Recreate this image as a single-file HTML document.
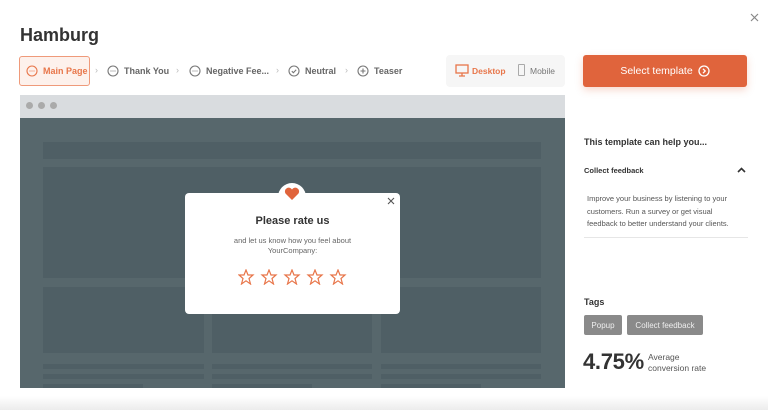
<!DOCTYPE html>
<html><head><meta charset="utf-8"><style>
*{box-sizing:border-box;margin:0;padding:0}
body{width:768px;height:410px;overflow:hidden;background:#fff;font-family:"Liberation Sans",sans-serif;position:relative;color:#333}
.a{position:absolute}
.blk{position:absolute;background:#4f5f65}
.tab{position:absolute;top:65px;font-size:9px;color:#666;display:flex;align-items:center;gap:5px;font-weight:600}
.tab svg{display:block}
.sep{position:absolute;top:65px;font-size:9px;color:#bbb}
</style></head><body>
<div class="a" style="left:20px;top:25px;font-size:18px;font-weight:bold;color:#333">Hamburg</div>
<svg class="a" style="left:750px;top:13px" width="9" height="9" viewBox="0 0 9 9"><path d="M1 1L8 8M8 1L1 8" stroke="#888" stroke-width="1.2"/></svg>

<div class="a" style="left:19px;top:56px;width:71px;height:30px;border:1px solid #ef9a7a;background:#fdf1ec;border-radius:3px"></div>
<div class="tab" style="left:26px;color:#e8764a"><svg width="12" height="12" viewBox="0 0 12 12"><circle cx="6" cy="6" r="5" fill="none" stroke="#e8764a" stroke-width="1.1"/><path d="M3.5 6h1M5.5 6h1M7.5 6h1" stroke="#e8764a" stroke-width="1.1"/></svg>Main Page</div>
<div class="sep" style="left:95px">›</div>
<div class="tab" style="left:107px"><svg width="12" height="12" viewBox="0 0 12 12"><circle cx="6" cy="6" r="5" fill="none" stroke="#777" stroke-width="1.1"/><path d="M3.5 6h1M5.5 6h1M7.5 6h1" stroke="#777" stroke-width="1.1"/></svg>Thank You</div>
<div class="sep" style="left:176px">›</div>
<div class="tab" style="left:189px"><svg width="12" height="12" viewBox="0 0 12 12"><circle cx="6" cy="6" r="5" fill="none" stroke="#777" stroke-width="1.1"/><path d="M3.5 6h1M5.5 6h1M7.5 6h1" stroke="#777" stroke-width="1.1"/></svg>Negative Fee...</div>
<div class="sep" style="left:276px">›</div>
<div class="tab" style="left:288px"><svg width="12" height="12" viewBox="0 0 12 12"><circle cx="6" cy="6" r="5" fill="none" stroke="#777" stroke-width="1.1"/><path d="M3.8 6.2l1.6 1.5 2.8-3" fill="none" stroke="#777" stroke-width="1.1"/></svg>Neutral</div>
<div class="sep" style="left:345px">›</div>
<div class="tab" style="left:357px"><svg width="12" height="12" viewBox="0 0 12 12"><circle cx="6" cy="6" r="5" fill="none" stroke="#777" stroke-width="1.1"/><path d="M6 3.5v5M3.5 6h5" stroke="#777" stroke-width="1.1"/></svg>Teaser</div>

<div class="a" style="left:446px;top:55px;width:119px;height:32px;background:#f6f6f6;border-radius:4px"></div>
<svg class="a" style="left:455px;top:64px" width="14" height="13" viewBox="0 0 14 13"><rect x="1" y="1" width="12" height="8" fill="none" stroke="#e8764a" stroke-width="1.3"/><path d="M7 9v3M4 12h6" stroke="#e8764a" stroke-width="1.3"/></svg>
<div class="a" style="left:472px;top:66px;font-size:8.5px;color:#e8764a;font-weight:600">Desktop</div>
<div class="a" style="left:518px;top:64px;width:7px;height:12px;border:1px solid #aaa;border-radius:1px"></div>
<div class="a" style="left:530px;top:66px;font-size:8.5px;color:#777">Mobile</div>

<div class="a" style="left:583px;top:55px;width:164px;height:32px;background:#e0643c;border-radius:3px;box-shadow:0 3px 8px rgba(224,100,60,.25);color:#fff;font-size:10.5px;display:flex;align-items:center;justify-content:center;gap:5px">Select template <svg width="12" height="12" viewBox="0 0 12 12"><circle cx="6" cy="6" r="5" fill="none" stroke="#fff" stroke-width="1.3"/><path d="M5 3.8L7.2 6 5 8.2" fill="none" stroke="#fff" stroke-width="1.3"/></svg></div>

<div class="a" style="left:20px;top:95px;width:545px;height:23px;background:#d9dcdf"></div>
<div class="a" style="left:26px;top:102px;width:7px;height:7px;border-radius:50%;background:#aaa"></div>
<div class="a" style="left:38px;top:102px;width:7px;height:7px;border-radius:50%;background:#aaa"></div>
<div class="a" style="left:50px;top:102px;width:7px;height:7px;border-radius:50%;background:#aaa"></div>
<div class="a" style="left:20px;top:118px;width:545px;height:270px;background:#57676c"></div>
<div class="blk" style="left:43px;top:142px;width:498px;height:17px"></div>
<div class="blk" style="left:43px;top:167px;width:498px;height:111px"></div>
<div class="blk" style="left:43px;top:287px;width:161px;height:66px"></div>
<div class="blk" style="left:212px;top:287px;width:160px;height:66px"></div>
<div class="blk" style="left:381px;top:287px;width:160px;height:66px"></div>
<div class="blk" style="left:43px;top:364px;width:161px;height:5px"></div>
<div class="blk" style="left:212px;top:364px;width:160px;height:5px"></div>
<div class="blk" style="left:381px;top:364px;width:160px;height:5px"></div>
<div class="blk" style="left:43px;top:374px;width:161px;height:5px"></div>
<div class="blk" style="left:212px;top:374px;width:160px;height:5px"></div>
<div class="blk" style="left:381px;top:374px;width:160px;height:5px"></div>
<div class="blk" style="left:43px;top:384px;width:100px;height:4px"></div>
<div class="blk" style="left:212px;top:384px;width:100px;height:4px"></div>
<div class="blk" style="left:381px;top:384px;width:100px;height:4px"></div>

<div class="a" style="left:185px;top:193px;width:215px;height:121px;background:#fff;border-radius:4px"></div>
<div class="a" style="left:278px;top:183px;width:28px;height:28px;background:#fff;border-radius:50%"></div>
<svg class="a" style="left:284px;top:187px" width="16" height="14" viewBox="0 0 16 14"><path d="M8 13 L1.5 6.5 A3.5 3.5 0 0 1 8 2.5 A3.5 3.5 0 0 1 14.5 6.5 Z" fill="#e0643c"/></svg>
<svg class="a" style="left:387px;top:197px" width="8" height="8" viewBox="0 0 8 8"><path d="M1 1L7 7M7 1L1 7" stroke="#555" stroke-width="1.1"/></svg>
<div class="a" style="left:185px;top:215px;width:215px;text-align:center;font-size:11px;font-weight:bold;color:#333">Please rate us</div>
<div class="a" style="left:185px;top:236px;width:215px;text-align:center;font-size:7.5px;line-height:10px;color:#666">and let us know how you feel about<br>YourCompany:</div>
<svg class="a" style="left:238px;top:269px" width="110" height="16" viewBox="0 0 110 16">
<g fill="none" stroke="#e8764a" stroke-width="1.2">
<path id="s" d="M8 1 L10 6 L15 6 L11 9.5 L12.5 15 L8 11.8 L3.5 15 L5 9.5 L1 6 L6 6 Z"/>
<use href="#s" x="23"/><use href="#s" x="46"/><use href="#s" x="69"/><use href="#s" x="92"/>
</g></svg>

<div class="a" style="left:584px;top:137px;font-size:9px;font-weight:bold;color:#333">This template can help you...</div>
<div class="a" style="left:584px;top:166px;font-size:7.5px;font-weight:bold;color:#333">Collect feedback</div>
<svg class="a" style="left:737px;top:167px" width="9" height="6" viewBox="0 0 9 6"><path d="M1 5L4.5 1.5 8 5" fill="none" stroke="#333" stroke-width="1.6"/></svg>
<div class="a" style="left:587px;top:193px;font-size:7.5px;line-height:12.5px;color:#555">Improve your business by listening to your<br>customers. Run a survey or get visual<br>feedback to better understand your clients.</div>
<div class="a" style="left:584px;top:237px;width:164px;height:1px;background:#e6e6e6"></div>
<div class="a" style="left:584px;top:297px;font-size:9px;font-weight:bold;color:#333">Tags</div>
<div class="a" style="left:584px;top:315px;width:38px;height:20px;background:#8a8a8a;border-radius:2px;color:#eee;font-size:8px;line-height:21px;text-align:center">Popup</div>
<div class="a" style="left:627px;top:315px;width:76px;height:20px;background:#8a8a8a;border-radius:2px;color:#eee;font-size:8px;line-height:21px;text-align:center">Collect feedback</div>
<div class="a" style="left:583px;top:349px;font-size:22px;font-weight:bold;color:#333;letter-spacing:-0.3px">4.75%</div>
<div class="a" style="left:648px;top:352px;font-size:8.5px;line-height:10.5px;color:#555">Average<br>conversion rate</div>
<div class="a" style="left:0;top:396px;width:768px;height:14px;background:linear-gradient(#fff,#ececec)"></div>
</body></html>
